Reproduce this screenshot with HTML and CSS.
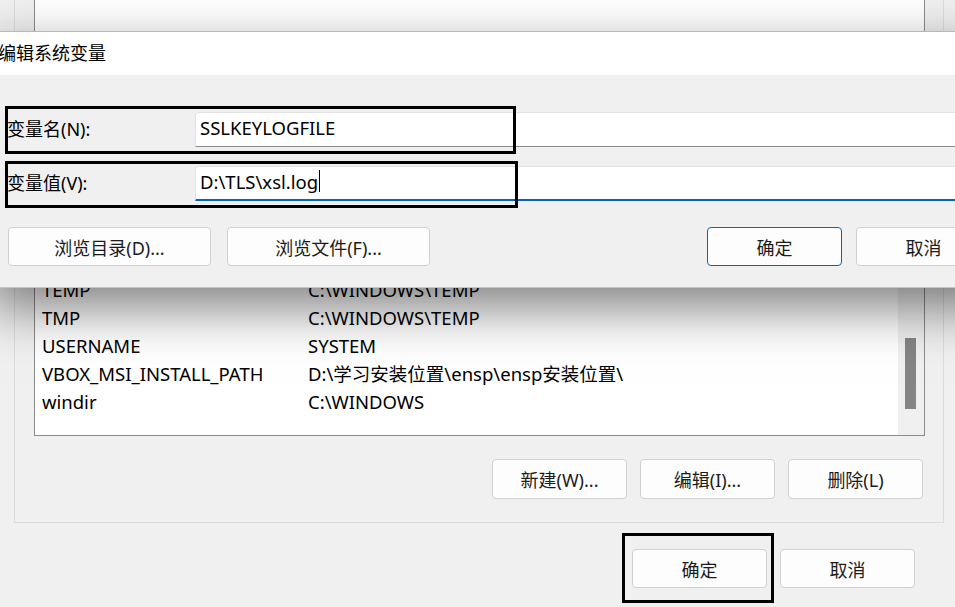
FILE: index.html
```html
<!DOCTYPE html>
<html lang="zh-CN">
<head>
    <meta charset="UTF-8">
    <title>编辑系统变量</title>
    <link rel="stylesheet" href="styles.css">
</head>
<body>
    <!-- back window: system variables -->
    <div class="sysvars">
        <div class="group">
            <div class="varlist">
                <div class="rows">
                    <div class="row"><span class="name">TEMP</span><span class="value">C:\WINDOWS\TEMP</span></div>
                    <div class="row"><span class="name">TMP</span><span class="value">C:\WINDOWS\TEMP</span></div>
                    <div class="row"><span class="name">USERNAME</span><span class="value">SYSTEM</span></div>
                    <div class="row"><span class="name">VBOX_MSI_INSTALL_PATH</span><span class="value">D:\学习安装位置\ensp\ensp安装位置\</span></div>
                    <div class="row"><span class="name">windir</span><span class="value">C:\WINDOWS</span></div>
                </div>
                <div class="scrollbar"><div class="thumb"></div></div>
            </div>
            <div class="actions">
                <button class="btn">新建(W)...</button>
                <button class="btn">编辑(I)...</button>
                <button class="btn">删除(L)</button>
            </div>
        </div>
        <div class="footer">
            <button class="btn">确定</button>
            <button class="btn">取消</button>
        </div>
    </div>

    <!-- front dialog: edit system variable -->
    <div class="dialog">
        <div class="titlebar">编辑系统变量</div>
        <div class="dialog-body">
            <div class="field">
                <label>变量名(N):</label>
                <div class="input">SSLKEYLOGFILE</div>
            </div>
            <div class="field">
                <label>变量值(V):</label>
                <div class="input focused">D:\TLS\xsl.log<span class="caret"></span></div>
            </div>
            <div class="dialog-actions">
                <button class="btn wide">浏览目录(D)...</button>
                <button class="btn wide">浏览文件(F)...</button>
                <div class="right">
                    <button class="btn primary">确定</button>
                    <button class="btn">取消</button>
                </div>
            </div>
        </div>
    </div>

    <!-- annotation boxes -->
    <div class="mark mark-name"></div>
    <div class="mark mark-value"></div>
    <div class="mark mark-ok"></div>
</body>
</html>
```

FILE: styles.css
```css
/* General */
* {
    box-sizing: border-box;
}

html,
body {
    margin: 0;
    height: 100%;
    overflow: hidden;
}

body {
    position: relative;
    background-color: #f0f0f0;
    font-family: "Noto Sans", "Noto Sans CJK SC", sans-serif;
    font-size: 18px;
    color: #000;
}

.btn {
    height: 39px;
    width: 135px;
    padding: 0;
    font-family: inherit;
    font-size: 18px;
    color: #1b1b1b;
    background-color: #fdfdfd;
    border: 1px solid #d0d0d0;
    border-radius: 4px;
}

/* Back window */
.group {
    margin: -20px 11px 0 14px;
    padding: 0 18px 23px 19px;
    border: 1px solid #dcdcdc;
    border-top: none;
}

.varlist {
    display: flex;
    height: 456px;
    background-color: #fff;
    border: 1px solid #8a8a8a;
}

.rows {
    flex: 1;
    padding-top: 295px;
}

.row {
    display: flex;
    height: 28px;
    line-height: 28px;
    padding-left: 7px;
    font-size: 18.5px;
    white-space: nowrap;
}

.row .name {
    width: 266px;
}

.scrollbar {
    width: 26px;
    padding-top: 357px;
    background: linear-gradient(to bottom, #fff 80px, #f0f0f0 80px);
}

.thumb {
    width: 11px;
    height: 71px;
    margin-left: 7px;
    background-color: #858585;
}

.actions {
    display: flex;
    justify-content: flex-end;
    gap: 13px;
    margin-top: 23px;
    padding-right: 2px;
}

.actions .btn {
    height: 40px;
}

.footer {
    display: flex;
    justify-content: flex-end;
    gap: 13px;
    margin-top: 26px;
    padding-right: 40px;
}

/* Front dialog */
.dialog {
    position: absolute;
    top: 31px;
    left: -10px;
    width: 1018px;
    height: 257px;
    background-color: #f0f0f0;
    border-top: 1px solid #b9b9b9;
    border-bottom: 1px solid #c4c4c4;
    box-shadow: 0 20px 50px rgba(0, 0, 0, 0.5);
}

.titlebar {
    height: 43px;
    line-height: 43px;
    padding-left: 8px;
    background-color: #fff;
}

.dialog-body {
    padding: 37px 17px 0 17px;
}

.field {
    display: flex;
    align-items: center;
    height: 35px;
    margin-bottom: 19px;
}

.field label {
    width: 188px;
    margin-top: -3px;
}

.input {
    flex: 1;
    display: flex;
    align-items: center;
    height: 35px;
    padding: 0 0 4px 4px;
    font-size: 18.5px;
    background-color: #fff;
    border: 1px solid #e3e3e3;
    border-bottom-color: #8a8a8a;
    border-radius: 4px 4px 0 0;
}

.input.focused {
    border-bottom: 2px solid #0067c0;
}

.caret {
    display: inline-block;
    width: 1px;
    height: 22px;
    margin-left: 1px;
    background-color: #000;
}

.dialog-actions {
    display: flex;
    gap: 16px;
    margin-top: 26px;
    padding-left: 1px;
}

.dialog-actions .wide {
    width: 203px;
}

.dialog-actions .right {
    display: flex;
    gap: 14px;
    margin-left: auto;
}

.btn.primary {
    border-color: #0067c0;
}

/* Annotations */
.mark {
    position: absolute;
    border: 3px solid #000;
}

.mark-name {
    left: 5px;
    top: 106px;
    width: 511px;
    height: 48px;
}

.mark-value {
    left: 5px;
    top: 161px;
    width: 513px;
    height: 47px;
}

.mark-ok {
    left: 622px;
    top: 533px;
    width: 152px;
    height: 70px;
}
```
